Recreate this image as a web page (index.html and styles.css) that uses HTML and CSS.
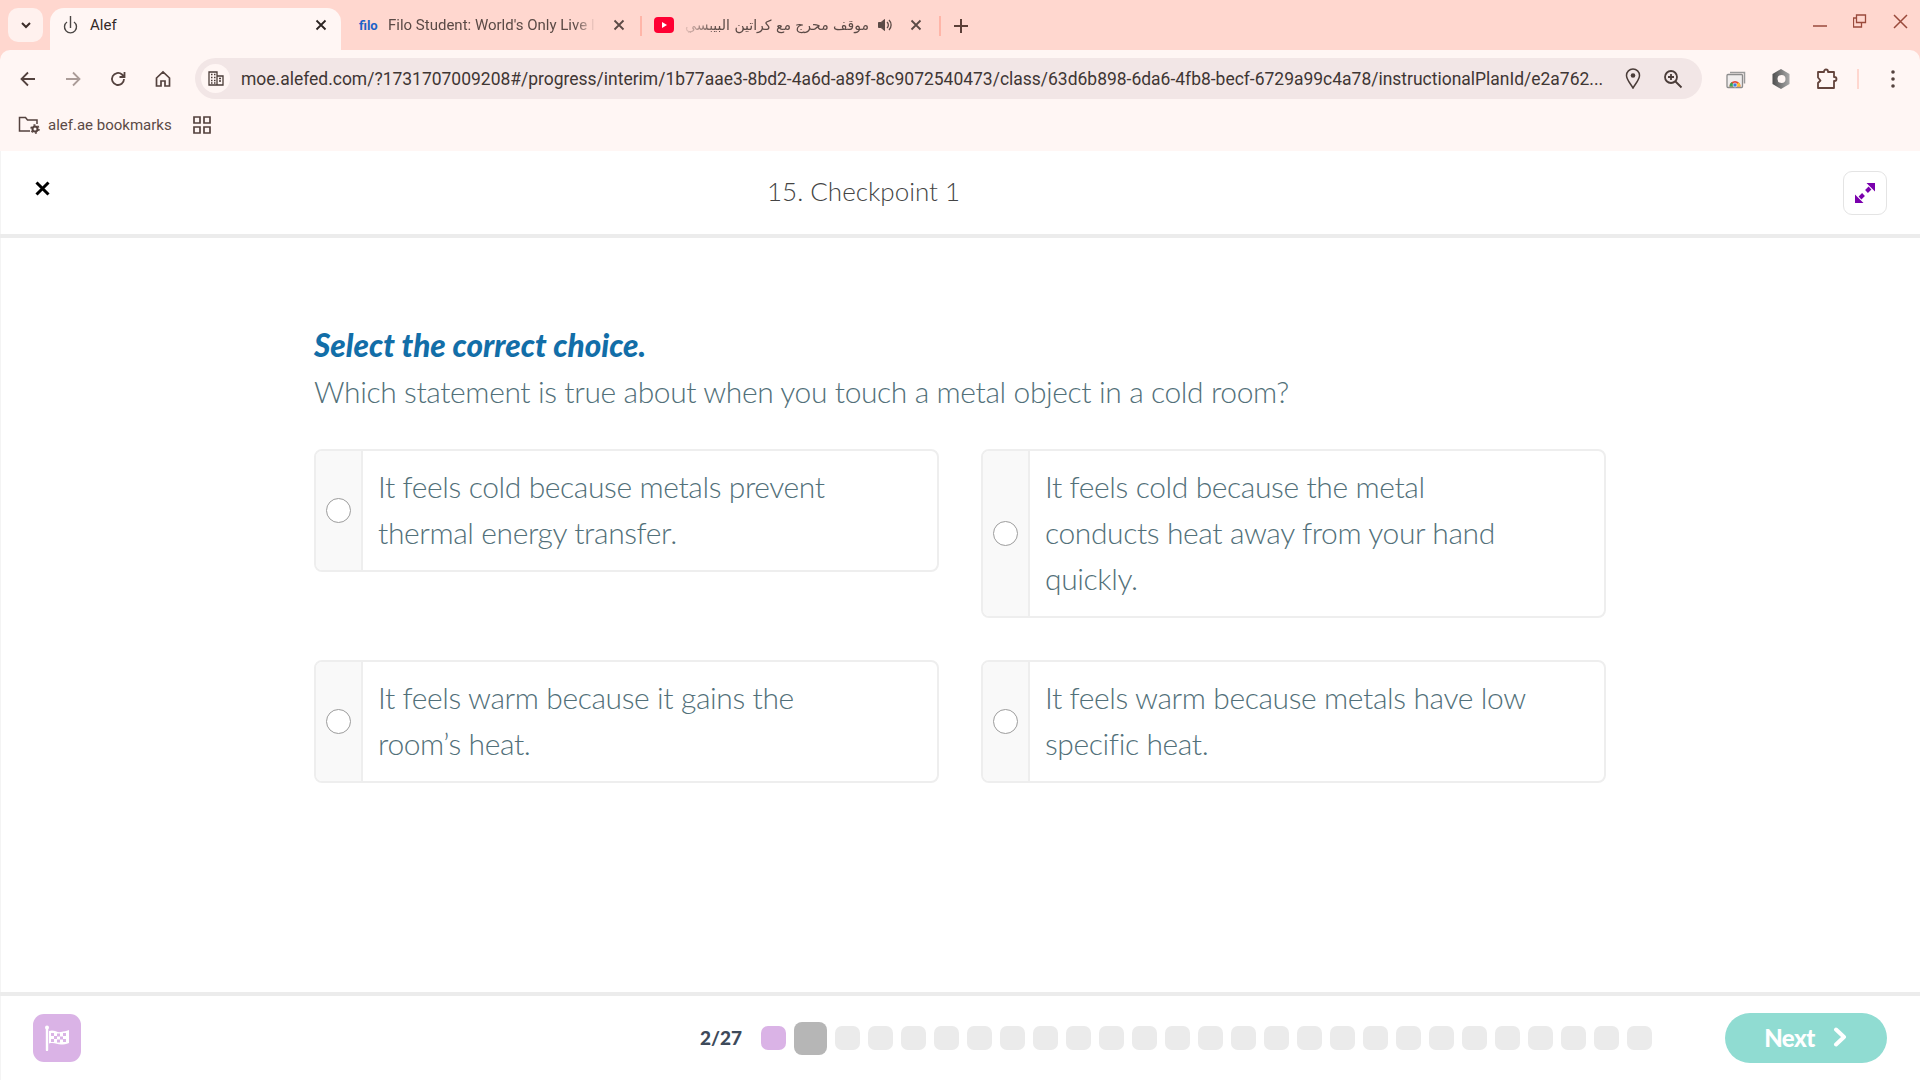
FILE: index.html
```html
<!DOCTYPE html>
<html lang="en">
<head>
<meta charset="utf-8">
<title>Alef</title>
<link rel="stylesheet" href="styles.css">
</head>
<body>
<div class="chrome">
  <div class="tabstrip">
    <div class="tab-search"><svg width="14" height="14" viewBox="0 0 14 14"><path d="M3 5l4 4 4-4" fill="none" stroke="#3c2c28" stroke-width="2"/></svg></div>
    <div class="tab tab-active">
      <svg class="tab-fav" width="16" height="20" viewBox="0 0 16 20"><path d="M8.500 1v12M5 7a6 6 0 1 0 7 0" fill="none" stroke="#4a4644" stroke-width="1.400"/></svg>
      <span class="tab-title">Alef</span>
      <svg class="tab-x" width="12" height="12" viewBox="0 0 12 12"><path d="M1.500 1.500l9 9M10.500 1.500l-9 9" stroke="#2c2422" stroke-width="1.800"/></svg>
    </div>
    <div class="tab tab-filo">
      <span class="filo">filo</span>
      <span class="tab-title fade">Filo Student: World's Only Live I</span>
      <svg class="tab-x" width="12" height="12" viewBox="0 0 12 12"><path d="M1.500 1.500l9 9M10.500 1.500l-9 9" stroke="#5b4a46" stroke-width="1.800"/></svg>
    </div>
    <div class="tab-sep"></div>
    <div class="tab tab-yt">
      <svg width="20" height="16" viewBox="0 0 20 16"><rect width="20" height="16" rx="4" fill="#ff0033"/><path d="M8 5l5 3-5 3z" fill="#fff"/></svg>
      <span class="tab-title fade-left" dir="rtl">موقف محرج مع كراتين البيبسي</span>
      <svg class="tab-audio" width="16" height="16" viewBox="0 0 16 16"><path d="M1.500 5.500h2.500l3.500-3v11l-3.500-3h-2.500z" fill="#5b4a46" stroke="#5b4a46" stroke-width="1"/><path d="M10 5a4 4 0 0 1 0 6M12 3a7 7 0 0 1 0 10" fill="none" stroke="#5b4a46" stroke-width="1.300"/></svg>
      <svg class="tab-x" width="12" height="12" viewBox="0 0 12 12"><path d="M1.500 1.500l9 9M10.500 1.500l-9 9" stroke="#5b4a46" stroke-width="1.800"/></svg>
    </div>
    <div class="tab-sep"></div>
    <svg class="new-tab" width="14" height="14" viewBox="0 0 14 14"><path d="M7 0v14M0 7h14" stroke="#5b3f38" stroke-width="2"/></svg>
    <div class="win-controls">
      <svg width="14" height="14" viewBox="0 0 14 14"><path d="M0 12h14" stroke="#9a4a3c" stroke-width="1.500"/></svg>
      <svg width="14" height="14" viewBox="0 0 14 14"><path d="M3.500 1h9v7.500h-9zM3.500 4h-3v9h8v-4.500" fill="none" stroke="#9a4a3c" stroke-width="1.300"/></svg>
      <svg width="15" height="15" viewBox="0 0 15 15"><path d="M1 1l13 13M14 1l-13 13" stroke="#9a4a3c" stroke-width="1.500"/></svg>
    </div>
  </div>
  <div class="toolbar">
    <svg width="18" height="18" viewBox="0 0 18 18"><path d="M16 9H3M9 2.500L2.500 9 9 15.500" fill="none" stroke="#54423e" stroke-width="1.800"/></svg>
    <svg class="tool-gap" width="18" height="18" viewBox="0 0 18 18"><path d="M2 9h13M9 2.500L15.500 9 9 15.500" fill="none" stroke="#ab9c98" stroke-width="1.800"/></svg>
    <svg class="tool-gap" width="18" height="18" viewBox="0 0 18 18"><path d="M15 9a6 6 0 1 1-2-4.500L15 6.500M15.500 2v5h-5" fill="none" stroke="#54423e" stroke-width="1.800"/></svg>
    <svg class="tool-gap" width="18" height="18" viewBox="0 0 18 18"><path d="M2.500 8L9 2l6.500 6v8h-4.500v-5h-4v5h-4.500z" fill="none" stroke="#54423e" stroke-width="1.700"/></svg>
    <div class="omnibox">
      <div class="site-chip"><svg width="16" height="15" viewBox="0 0 16 15"><path d="M1 1h8v13h-8zM9 5h6v9h-6z" fill="none" stroke="#4a3c38" stroke-width="1.300"/><path d="M3 3.500h1.500M6 3.500h1.500M3 6.500h1.500M6 6.500h1.500M3 9.500h1.500M6 9.500h1.500M3 12h1.500M6 12h1.500M11 7.500h2M11 10h2" stroke="#4a3c38" stroke-width="1.500"/></svg></div>
      <span class="url">moe.alefed.com/?1731707009208#/progress/interim/1b77aae3-8bd2-4a6d-a89f-8c9072540473/class/63d6b898-6da6-4fb8-becf-6729a99c4a78/instructionalPlanId/e2a762...</span>
      <svg class="pin" width="16" height="21" viewBox="0 0 16 21"><path d="M8 20C5 15 1.500 11.500 1.500 7.500a6.500 6.500 0 0 1 13 0C14.500 11.500 11 15 8 20z" fill="none" stroke="#4a3c38" stroke-width="1.500"/><circle cx="8" cy="7.500" r="2.300" fill="#4a3c38"/></svg>
      <svg class="zoom-ic" width="20" height="20" viewBox="0 0 20 20"><circle cx="8" cy="8" r="6" fill="none" stroke="#4a3c38" stroke-width="1.800"/><path d="M12.500 12.500L18.500 18.500M5 8h6M8 5v6" stroke="#4a3c38" stroke-width="1.800"/></svg>
    </div>
    <svg class="ext-cast" width="20" height="20" viewBox="0 0 20 20"><path d="M4 3.500h14.500v11" fill="none" stroke="#9a9a9a" stroke-width="1.500"/><rect x="1" y="5.500" width="15.500" height="13" rx="1" fill="#f0eded" stroke="#8c8c8c" stroke-width="1.300"/><path d="M3.500 17.500a5.500 5.500 0 0 1 11 0z" fill="#e24a3b"/><path d="M3.500 17.500a5.500 5.500 0 0 1 2-4.200l3.500 4.200z" fill="#34a853"/><path d="M14.500 17.500a5.500 5.500 0 0 0-2-4.200l-3.500 4.200z" fill="#fbc02d"/><circle cx="9" cy="16" r="2" fill="#3b7de0" stroke="#fff" stroke-width=".6"/></svg>
    <svg class="ext-ring" width="20" height="22" viewBox="0 0 20 22"><defs><linearGradient id="ringfill" x1="0" y1="0" x2="1" y2="0"><stop offset="0" stop-color="#4f4f4f"/><stop offset="1" stop-color="#a8a8a8"/></linearGradient></defs><path d="M10 1l8.500 5v10L10 21l-8.500-5V6z" fill="url(#ringfill)"/><circle cx="10.500" cy="11" r="4" fill="#fff6f4"/></svg>
    <svg class="ext-puzzle" width="22" height="22" viewBox="0 0 22 22"><path d="M2 4h6v-.5a2 2 0 0 1 4 0V4h6v5h.5a2 2 0 0 1 0 4H18v7H2v-5l2.500-2.500L2 9.500z" fill="none" stroke="#64443c" stroke-width="1.800" stroke-linejoin="round"/></svg>
    <div class="tool-sep"></div>
    <svg class="menu-dots" width="4" height="18" viewBox="0 0 4 18"><circle cx="2" cy="2" r="1.800" fill="#54423e"/><circle cx="2" cy="9" r="1.800" fill="#54423e"/><circle cx="2" cy="16" r="1.800" fill="#54423e"/></svg>
  </div>
  <div class="bookmarks">
    <svg width="22" height="18" viewBox="0 0 22 18"><path d="M12 15H1.500V1.500h6l2 2.500h9.500v4" fill="none" stroke="#54423e" stroke-width="1.500"/><circle cx="17" cy="13" r="2.500" fill="none" stroke="#54423e" stroke-width="2"/><circle cx="17" cy="13" r="4" fill="none" stroke="#54423e" stroke-width="1.500" stroke-dasharray="2 2.200"/></svg>
    <span class="bm-label">alef.ae bookmarks</span>
    <svg class="bm-apps" width="18" height="18" viewBox="0 0 18 18"><path d="M1 1h6v6h-6zM11 1h6v6h-6zM1 11h6v6h-6zM11 11h6v6h-6z" fill="none" stroke="#54423e" stroke-width="1.700"/></svg>
  </div>
</div>

<div class="app">
  <header class="app-header">
    <svg class="close" width="15" height="15" viewBox="0 0 15 15"><path d="M1.500 1.500l12 12M13.500 1.500l-12 12" stroke="#000" stroke-width="3"/></svg>
    <h1 class="lesson-title">15. Checkpoint 1</h1>
    <button class="expand"><svg width="22" height="22" viewBox="0 0 22 22"><path d="M21 1h-8.500L21 9.500zM1 21h8.500L1 12.500z" fill="#7a00ad"/><path d="M16 6l-3.500 3.500M6 16l3.500-3.500" stroke="#7a00ad" stroke-width="4"/></svg></button>
  </header>

  <main class="question">
    <h2 class="instruction">Select the correct choice.</h2>
    <p class="prompt">Which statement is true about when you touch a metal object in a cold room?</p>
    <div class="choices">
      <div class="choice"><div class="radio-cell"><span class="radio"></span></div><div class="choice-text">It feels cold because metals prevent thermal energy transfer.</div></div>
      <div class="choice"><div class="radio-cell"><span class="radio"></span></div><div class="choice-text">It feels cold because the metal conducts heat away from your hand quickly.</div></div>
      <div class="choice"><div class="radio-cell"><span class="radio"></span></div><div class="choice-text">It feels warm because it gains the room’s heat.</div></div>
      <div class="choice"><div class="radio-cell"><span class="radio"></span></div><div class="choice-text">It feels warm because metals have low specific heat.</div></div>
    </div>
  </main>

  <footer class="app-footer">
    <button class="flag"><svg width="26" height="26" viewBox="0 0 26 26"><circle cx="3" cy="2.500" r="2" fill="#fff"/><path d="M3 3v22" stroke="#fff" stroke-width="2.400" stroke-linecap="round"/><path d="M5 6c5-2 8 2 12 1 3-.5 5-1 8-2v13c-3 1-5 1.500-8 1.500-4 0-7-2.500-12-1z" fill="#fff"/><path d="M7 8h3v3H7zM13 8.500h3v3h-3zM19 8h3v3h-3zM10 11h3v3h-3zM16 11.500h3v3h-3zM7 14h3v3H7zM13 14.500h3v3h-3zM19 14h3v3h-3z" fill="#dab3e6"/></svg></button>
    <span class="count">2/27</span>
    <div class="steps">
      <span class="step step-done"></span>
      <span class="step step-current"></span>
      <span class="step"></span><span class="step"></span><span class="step"></span><span class="step"></span><span class="step"></span>
      <span class="step"></span><span class="step"></span><span class="step"></span><span class="step"></span><span class="step"></span>
      <span class="step"></span><span class="step"></span><span class="step"></span><span class="step"></span><span class="step"></span>
      <span class="step"></span><span class="step"></span><span class="step"></span><span class="step"></span><span class="step"></span>
      <span class="step"></span><span class="step"></span><span class="step"></span><span class="step"></span><span class="step"></span>
    </div>
    <button class="next"><span class="next-label">Next</span><svg width="15" height="20" viewBox="0 0 15 20"><path d="M3 2.500l8 7.500-8 7.500" fill="none" stroke="#fff" stroke-width="4" stroke-linecap="round" stroke-linejoin="round"/></svg></button>
  </footer>
</div>
</body>
</html>
```
FILE: styles.css
```css
* { box-sizing: border-box; }
html, body { margin: 0; padding: 0; height: 100%; }
body { width: 1920px; height: 1080px; overflow: hidden; background: #fff; font-family: "Roboto", "Liberation Sans", sans-serif; display: flex; flex-direction: column; }

.chrome { flex: none; background: #ffd7cf; }
.tabstrip { height: 50px; display: flex; align-items: flex-end; position: relative; }
.tab-search { width: 35px; height: 34px; margin: 0 7px 8px 8px; background: #fff1ee; border-radius: 10px; display: flex; align-items: center; justify-content: center; }
.tab { height: 42px; display: flex; align-items: center; padding-bottom: 8px; font-size: 15px; color: #5b4a46; white-space: nowrap; }
.tab-active { width: 291px; background: #fff6f4; border-radius: 14px 14px 0 0; padding: 0 14px 8px 12px; color: #332a28; }
.tab-fav { flex: none; }
.tab-active .tab-title { margin-left: 12px; flex: 1; }
.tab-filo { width: 299px; padding: 0 0 8px 18px; position: relative; }
.tab-filo .tab-x { margin-left: 13px; flex: none; }
.filo { color: #1a62c8; font-weight: 700; font-size: 13px; width: 29px; flex: none; }
.fade { width: 212px; margin-left: 0; -webkit-mask-image: linear-gradient(90deg, #000 88%, transparent 98%); mask-image: linear-gradient(90deg, #000 88%, transparent 98%); }
.tab-sep { width: 2px; height: 20px; background: #ffb5a8; margin-bottom: 14px; flex: none; }
.tab-yt { width: 297px; padding: 0 16px 8px 12px; margin-left: 0; }
.fade-left { width: 190px; margin-left: 5px; flex: none; font-family: "DejaVu Sans", sans-serif; font-size: 14px; line-height: 18px; text-align: right; -webkit-mask-image: linear-gradient(90deg, transparent 0%, #000 20%); mask-image: linear-gradient(90deg, transparent 0%, #000 20%); }
.tab-audio { margin-left: 8px; flex: none; }
.tab-yt .tab-x { margin-left: 17px; flex: none; }
.new-tab { margin: 0 0 17px 13px; flex: none; }
.win-controls { margin-left: auto; display: flex; align-items: flex-start; gap: 26px; padding: 0 12px 21px 0; }

.toolbar { height: 57px; background: #fff6f4; border-radius: 10px 10px 0 0; display: flex; align-items: center; padding: 0 0 0 19px; }
.tool-gap { margin-left: 27px; flex: none; }
.omnibox { width: 1507px; height: 41px; margin: 0 0 0 23px; background: #f2e6e6; border-radius: 21px; display: flex; align-items: center; padding: 0 19px 0 6px; flex: none; }
.site-chip { width: 29px; height: 29px; border-radius: 50%; background: #fff6f4; display: flex; align-items: center; justify-content: center; flex: none; }
.url { font-size: 17.480px; color: #3f3634; white-space: nowrap; margin-left: 11px; flex: 1; }
.pin { flex: none; }
.zoom-ic { margin-left: 22px; flex: none; }
.ext-cast { margin-left: 24px; flex: none; }
.ext-ring { margin-left: 25px; flex: none; }
.ext-puzzle { margin-left: 25px; flex: none; }
.tool-sep { width: 2px; height: 20px; background: #ffd7cf; margin-left: 19px; flex: none; }
.menu-dots { margin-left: 32px; flex: none; }

.bookmarks { height: 44px; background: #fff6f4; display: flex; align-items: center; padding: 0 0 8px 18px; }
.bm-label { font-size: 15px; color: #5b4a46; margin-left: 8px; }
.bm-apps { margin-left: 21px; }

.app { flex: 1; min-height: 0; display: flex; flex-direction: column; background: #fff; box-shadow: inset 1px 0 0 #f4f4f4; }
.app-header { height: 87px; flex: none; display: flex; align-items: center; border-bottom: 4px solid #ececec; padding: 0 33px 0 35px; }
.close { flex: none; margin-top: -8px; }
.lesson-title { margin: -4px 0 0 717px; font-family: "Lato", sans-serif; font-weight: 300; font-size: 26px; color: #444444; flex: none; }
.expand { margin-left: auto; width: 44px; height: 44px; padding: 0; background: #fff; border: 1px solid #e4e4e4; border-radius: 9px; display: flex; align-items: center; justify-content: center; }

.question { flex: 1; width: 1292px; align-self: center; padding-top: 88px; font-family: "Lato", sans-serif; }
.instruction { margin: 0; font-size: 31.500px; line-height: 38px; font-weight: 900; font-style: italic; color: #126ea8; }
.prompt { margin: 8px 0 0; font-size: 30px; line-height: 38px; font-weight: 300; letter-spacing: -.39px; color: #527079; }
.choices { display: grid; grid-template-columns: 625px 625px; column-gap: 42px; row-gap: 42px; align-items: start; margin-top: 39px; }
.choice { display: flex; align-items: stretch; border: 2px solid #eeeeee; border-radius: 8px; background: #fff; overflow: hidden; }
.radio-cell { width: 47px; flex: none; background: #f9f9f9; border-right: 2px solid #eeeeee; display: flex; align-items: center; justify-content: center; }
.radio { width: 25px; height: 25px; border: 1px solid #9c9c9c; border-radius: 50%; background: #fff; }
.choice-text { flex: 1; padding: 12px 69px 15px 15px; font-size: 30px; line-height: 46px; font-weight: 300; letter-spacing: -.39px; color: #527079; }

.app-footer { height: 88px; flex: none; display: flex; align-items: center; border-top: 4px solid #ececec; padding: 0 33px 0 33px; }
.flag { width: 48px; height: 48px; padding: 0; border: 0; border-radius: 11px; background: #dab3e6; display: flex; align-items: center; justify-content: center; flex: none; }
.count { width: 44px; margin-left: 619px; padding-bottom: 2px; font-family: "Lato", sans-serif; font-size: 19px; font-weight: 900; color: #3e4a5a; flex: none; }
.steps { display: flex; align-items: center; gap: 8px; margin-left: 17px; flex: none; }
.step { width: 25px; height: 24px; border-radius: 7px; background: #ebebeb; flex: none; }
.step-done { background: #dab3e6; }
.step-current { width: 33px; height: 33px; border-radius: 8px; background: #b6b6b6; }
.next { margin-left: auto; width: 162px; height: 50px; border: 0; border-radius: 25px; background: #90dcd2; color: #fff; font-family: "Lato", sans-serif; font-size: 24px; font-weight: 900; display: flex; align-items: center; justify-content: center; gap: 18px; padding: 0 0 2px; }
.next-label { letter-spacing: -.5px; }
```
